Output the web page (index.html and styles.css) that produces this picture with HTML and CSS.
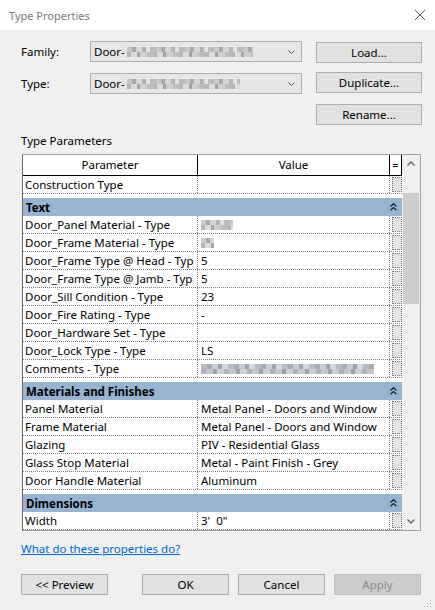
FILE: index.html
```html
<!DOCTYPE html>
<html lang="en">
<head>
<meta charset="utf-8">
<title>Type Properties</title>
<link rel="stylesheet" href="styles.css">
</head>
<body>
<div class="window">
  <div class="titlebar">
    <span class="title">Type Properties</span>
    <svg class="close" width="12" height="12" viewBox="0 0 12 12"><path d="M1 1 L11 11 M11 1 L1 11" stroke="#5a5a5a" stroke-width="1" fill="none"/></svg>
  </div>
  <div class="content">
    <div class="top">
      <div class="lbl">Family:</div>
      <div class="select"><span class="sel-text">Door-<span class="mosaic mf"></span></span><svg class="dd" width="7" height="4" viewBox="0 0 7 4"><path d="M0.5 0.5 L3.5 3.5 L6.5 0.5" stroke="#555" fill="none"/></svg></div>
      <button class="btn b1">Load...</button>
      <div class="lbl">Type:</div>
      <div class="select s2"><span class="sel-text">Door-<span class="mosaic mt"></span></span><svg class="dd" width="7" height="4" viewBox="0 0 7 4"><path d="M0.5 0.5 L3.5 3.5 L6.5 0.5" stroke="#555" fill="none"/></svg></div>
      <button class="btn b2">Duplicate...</button>
      <button class="btn b3">Rename...</button>
    </div>

    <div class="tp-label">Type Parameters</div>

    <div class="table">
      <div class="grid">
        <div class="hdr">
          <div class="hc hp">Parameter</div>
          <div class="hc hv">Value</div>
          <div class="hc he">=</div>
        </div>

        <div class="row"><div class="c p">Construction Type</div><div class="c v"></div><div class="c e"><span class="box"></span></div></div>

        <div class="grp"><div class="band"><span>Text</span><svg class="chev" width="7" height="8" viewBox="0 0 7 8"><path d="M0.5 3.5 L3.5 0.8 L6.5 3.5 M0.5 7.2 L3.5 4.5 L6.5 7.2" stroke="#1a1a1a" stroke-width="1.2" fill="none"/></svg></div></div>
        <div class="row"><div class="c p">Door_Panel Material - Type</div><div class="c v"><span class="mosaic mv1"></span></div><div class="c e"><span class="box"></span></div></div>
        <div class="row"><div class="c p">Door_Frame Material - Type</div><div class="c v"><span class="mosaic mv2"></span></div><div class="c e"><span class="box"></span></div></div>
        <div class="row"><div class="c p">Door_Frame Type @ Head - Typ</div><div class="c v">5</div><div class="c e"><span class="box"></span></div></div>
        <div class="row"><div class="c p">Door_Frame Type @ Jamb - Typ</div><div class="c v">5</div><div class="c e"><span class="box"></span></div></div>
        <div class="row"><div class="c p">Door_Sill Condition - Type</div><div class="c v">23</div><div class="c e"><span class="box"></span></div></div>
        <div class="row"><div class="c p">Door_Fire Rating - Type</div><div class="c v">-</div><div class="c e"><span class="box"></span></div></div>
        <div class="row"><div class="c p">Door_Hardware Set - Type</div><div class="c v"></div><div class="c e"><span class="box"></span></div></div>
        <div class="row"><div class="c p">Door_Lock Type - Type</div><div class="c v">LS</div><div class="c e"><span class="box"></span></div></div>
        <div class="row"><div class="c p">Comments - Type</div><div class="c v"><span class="mosaic mv3"></span></div><div class="c e"><span class="box"></span></div></div>

        <div class="grp"><div class="band"><span>Materials and Finishes</span><svg class="chev" width="7" height="8" viewBox="0 0 7 8"><path d="M0.5 3.5 L3.5 0.8 L6.5 3.5 M0.5 7.2 L3.5 4.5 L6.5 7.2" stroke="#1a1a1a" stroke-width="1.2" fill="none"/></svg></div></div>
        <div class="row"><div class="c p">Panel Material</div><div class="c v">Metal Panel - Doors and Window</div><div class="c e"><span class="box"></span></div></div>
        <div class="row"><div class="c p">Frame Material</div><div class="c v">Metal Panel - Doors and Window</div><div class="c e"><span class="box"></span></div></div>
        <div class="row"><div class="c p">Glazing</div><div class="c v">PIV - Residential Glass</div><div class="c e"><span class="box"></span></div></div>
        <div class="row"><div class="c p">Glass Stop Material</div><div class="c v">Metal - Paint Finish - Grey</div><div class="c e"><span class="box"></span></div></div>
        <div class="row"><div class="c p">Door Handle Material</div><div class="c v">Aluminum</div><div class="c e"><span class="box"></span></div></div>

        <div class="grp"><div class="band"><span>Dimensions</span><svg class="chev" width="7" height="8" viewBox="0 0 7 8"><path d="M0.5 3.5 L3.5 0.8 L6.5 3.5 M0.5 7.2 L3.5 4.5 L6.5 7.2" stroke="#1a1a1a" stroke-width="1.2" fill="none"/></svg></div></div>
        <div class="row last"><div class="c p">Width</div><div class="c v">3'&nbsp;&nbsp;0"</div><div class="c e"><span class="box"></span></div></div>
      </div>
      <div class="vscroll">
        <div class="sb-btn"><svg width="8" height="5" viewBox="0 0 8 5"><path d="M0.5 4.5 L4 1 L7.5 4.5" stroke="#606060" stroke-width="1.3" fill="none"/></svg></div>
        <div class="thumb"></div>
        <div class="sb-btn down"><svg width="8" height="5" viewBox="0 0 8 5"><path d="M0.5 0.5 L4 4 L7.5 0.5" stroke="#606060" stroke-width="1.3" fill="none"/></svg></div>
      </div>
    </div>

    <a class="help" href="#">What do these properties do?</a>

    <div class="footer">
      <button class="btn fbtn">&lt;&lt; Preview</button>
      <div class="fgroup">
        <button class="btn fbtn">OK</button>
        <button class="btn fbtn">Cancel</button>
        <button class="btn fbtn disabled">Apply</button>
      </div>
    </div>
  </div>
  <svg class="grip" width="8" height="8" viewBox="0 0 8 8"><rect x="6" y="0" width="1" height="1" fill="#b8b8b8"/><rect x="3" y="3" width="1" height="1" fill="#b8b8b8"/><rect x="6" y="3" width="1" height="1" fill="#b8b8b8"/><rect x="0" y="6" width="1" height="1" fill="#b8b8b8"/><rect x="3" y="6" width="1" height="1" fill="#b8b8b8"/><rect x="6" y="6" width="1" height="1" fill="#b8b8b8"/></svg>
</div>
</body>
</html>
```

FILE: styles.css
```css
* { box-sizing: border-box; }

html, body {
  margin: 0;
  padding: 0;
}

body {
  background: #f0f0f0;
  font-family: "Noto Sans", "Open Sans", sans-serif;
  font-size: 11.5px;
  color: #000;
}

.window {
  position: relative;
  width: 435px;
  height: 610px;
  overflow: hidden;
}

.titlebar {
  height: 30px;
  background: #fff;
  display: flex;
  align-items: center;
  justify-content: space-between;
  padding: 0 9px 0 9px;
}

.title {
  color: #7a7a7a;
  font-size: 11px;
}

.close {
  display: block;
}

.content {
  padding: 11px 13px 0 20px;
}

.top {
  display: grid;
  grid-template-columns: 70px 212px 1fr;
  grid-template-rows: 21px 22px 21px;
  column-gap: 0;
  row-gap: 10px;
}

.lbl {
  display: flex;
  align-items: center;
  padding-left: 1px;
}

.select {
  height: 21px;
  background: #e6e6e6;
  border: 1px solid #adadad;
  display: flex;
  align-items: center;
  justify-content: space-between;
  padding: 0 6px 0 3px;
}

.select.s2 {
  align-self: end;
}

.sel-text {
  display: flex;
  align-items: center;
  white-space: nowrap;
}

.dd {
  display: block;
}

.btn {
  font-family: inherit;
  font-size: 11.5px;
  color: #000;
  background: #e1e1e1;
  border: 1px solid #adadad;
  height: 21px;
  padding: 0;
  margin: 0;
  line-height: 19px;
}

.top .btn {
  width: 106px;
  justify-self: end;
  align-self: start;
}

.btn.b1 {
  margin-top: 1px;
}

.btn.b3 {
  grid-column: 3;
  grid-row: 3;
}

.tp-label {
  margin-top: 8px;
  line-height: 16px;
  padding-left: 1px;
}

.table {
  margin: 5px 0 0 2px;
  width: 399px;
  height: 377px;
  border: 1px solid #a0a0a0;
  border-left-color: #6a6a6a;
  display: flex;
  background: #f0f0f0;
}

.grid {
  width: 379px;
  background: #fff;
  display: flex;
  flex-direction: column;
}

.hdr {
  display: flex;
  height: 21px;
  border-bottom: 1px solid #000;
  flex: none;
}

.hc {
  display: flex;
  align-items: center;
  justify-content: center;
  line-height: 20px;
}

.hp {
  width: 175px;
  border-right: 1px solid #000;
}

.hv {
  width: 192px;
  border-right: 1px solid #000;
}

.he {
  width: 12px;
  border-right: 1px solid #000;
  font-size: 11px;
}

.row {
  display: flex;
  height: 18px;
  border-bottom: 1px dotted #808080;
  flex: none;
}

.c {
  line-height: 17px;
  white-space: nowrap;
  overflow: hidden;
}

.p {
  width: 175px;
  padding-left: 2px;
  border-right: 1px dotted #808080;
}

.v {
  width: 192px;
  padding-left: 3px;
  border-right: 1px dotted #808080;
  display: flex;
  align-items: center;
}

.e {
  width: 12px;
  padding: 1px 0 0 2px;
}

.box {
  display: block;
  width: 10px;
  height: 15px;
  background: #e2e2e2;
  border: 1px dotted #7a7a7a;
}

.grp {
  padding-top: 4px;
  background: #fff;
  flex: none;
}

.band {
  height: 18px;
  background: #99b4d1;
  font-weight: bold;
  display: flex;
  align-items: center;
  justify-content: space-between;
  padding: 0 5px 0 3px;
}

.chev {
  display: block;
}

.vscroll {
  width: 18px;
  display: flex;
  flex-direction: column;
  background: #f0f0f0;
}

.sb-btn {
  height: 17px;
  display: flex;
  align-items: center;
  justify-content: center;
  flex: none;
}

.sb-btn.down {
  margin-top: auto;
}

.thumb {
  margin: 21px 1px 0 1px;
  height: 111px;
  background: #cdcdcd;
  flex: none;
}

.mosaic {
  display: inline-block;
  height: 10px;
  background:
    repeating-linear-gradient(90deg, #c9c9c9 0 5px, #a9a9a9 5px 9px, #d6d6d6 9px 15px, #b3b3b3 15px 19px, #e2e2e2 19px 23px, #bcbcbc 23px 29px) top / 100% 5px no-repeat,
    repeating-linear-gradient(90deg, #b5b5b5 0 4px, #dcdcdc 4px 10px, #a4a4a4 10px 13px, #cfcfcf 13px 20px, #bdbdbd 20px 26px) bottom / 100% 5px no-repeat;
}

.mf { width: 126px; margin-left: 2px; }
.mt { width: 113px; margin-left: 2px; }
.mv1 { width: 32px; }
.mv2 { width: 13px; }
.mv3 {
  width: 173px;
  background:
    repeating-linear-gradient(90deg, #b7bbc4 0 6px, #a6abb5 6px 11px, #c8ccd3 11px 17px, #9ea3ad 17px 21px, #d4d7dc 21px 27px) top / 100% 5px no-repeat,
    repeating-linear-gradient(90deg, #aeb2bb 0 5px, #c3c7ce 5px 12px, #9da2ac 12px 16px, #cdd0d6 16px 23px) bottom / 100% 5px no-repeat;
}

.help {
  display: block;
  margin-top: 10px;
  padding-left: 1px;
  line-height: 16px;
  color: #0066cc;
  text-decoration: underline;
  width: max-content;
}

.footer {
  margin-top: 17px;
  display: flex;
  justify-content: space-between;
  padding: 0 1px;
}

.fgroup {
  display: flex;
  gap: 9px;
}

.fbtn {
  width: 87px;
}

.btn.disabled {
  background: #cccccc;
  border-color: #bfbfbf;
  color: #8a8a8a;
}

.grip {
  position: absolute;
  right: 3px;
  bottom: 2px;
}
```
